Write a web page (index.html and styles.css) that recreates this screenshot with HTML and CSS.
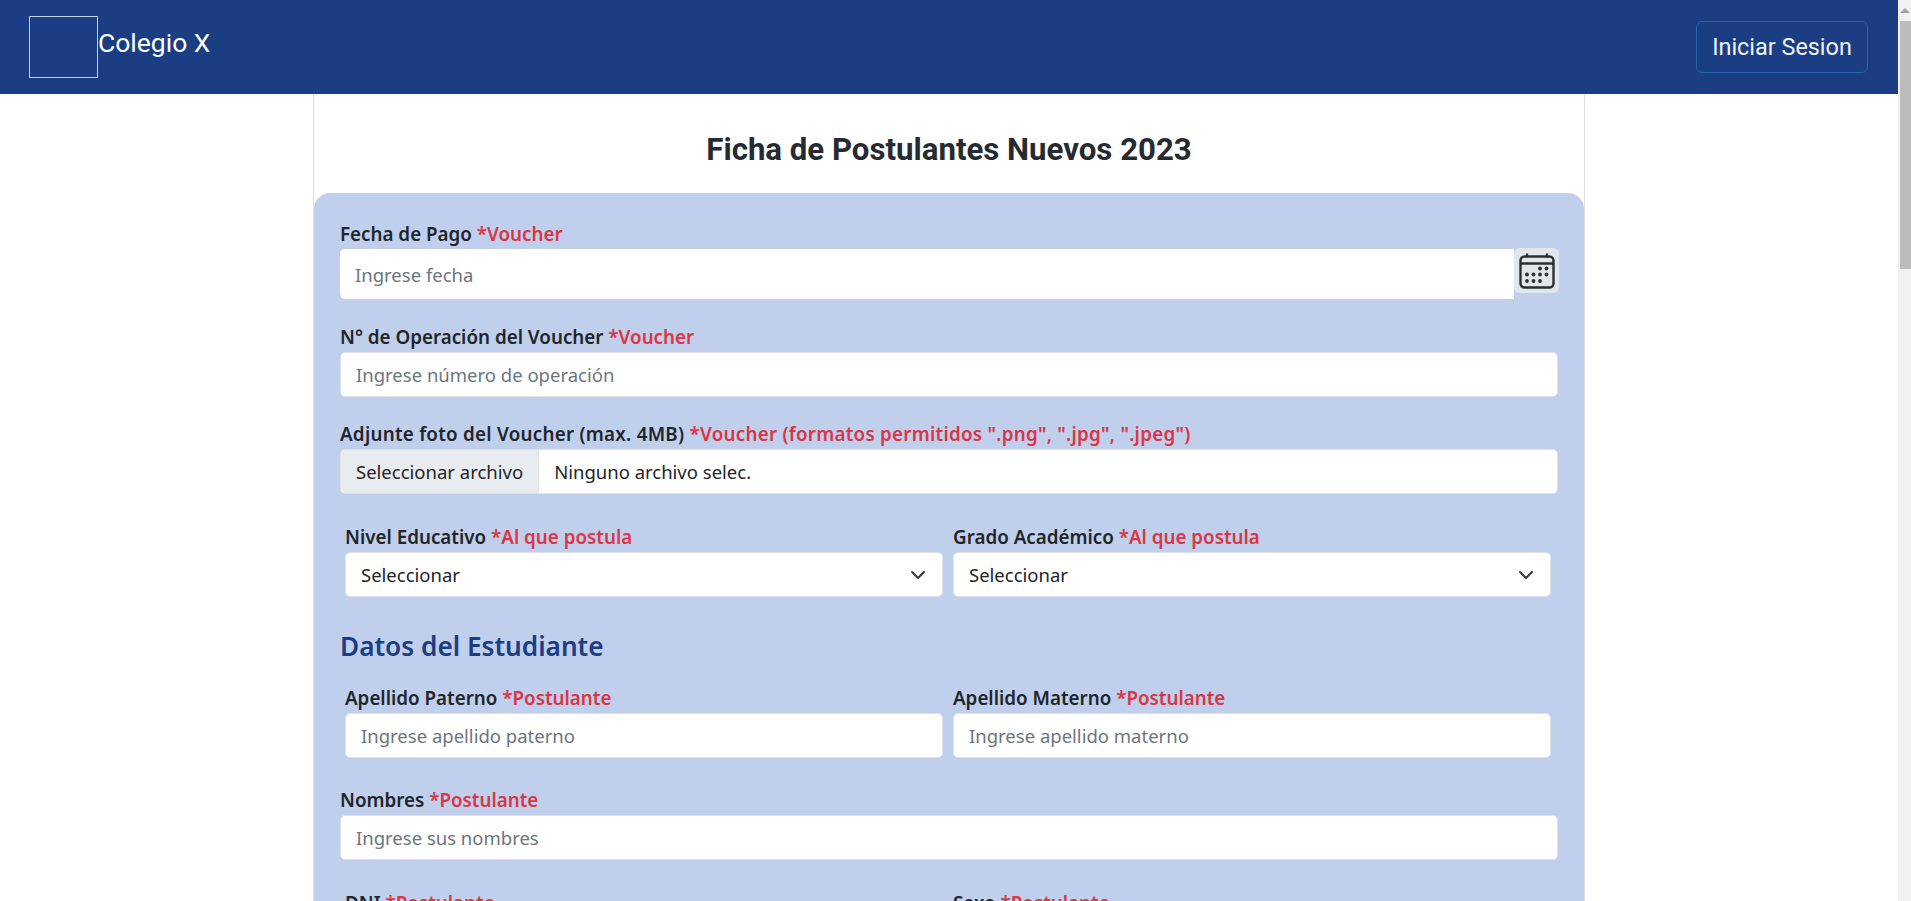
FILE: index.html
```html
<!DOCTYPE html>
<html lang="es">
<head>
  <meta charset="UTF-8">
  <title>Ficha de Postulantes Nuevos 2023</title>
  <meta name="viewport" content="width=device-width, initial-scale=1.0">
  <link rel="stylesheet" href="styles.css">
</head>
<body>

<nav class="navbar">
  <a class="brand" href="#">
    <span class="logo"></span>
    <span class="brand-name">Colegio X</span>
  </a>
  <button class="login-button" type="button">Iniciar Sesion</button>
</nav>

<main class="container">
  <h1>Ficha de Postulantes Nuevos 2023</h1>

  <form class="form-card">
    <div class="field date-field">
      <label>Fecha de Pago <span class="required">*Voucher</span></label>
      <div class="date-group">
        <input class="form-control date-input" type="text" placeholder="Ingrese fecha">
        <button class="calendar-button" type="button" aria-label="Abrir calendario">
          <svg viewBox="0 0 36 36" width="36" height="36" fill="none" stroke="#2b2f33">
            <rect x="1.5" y="3.5" width="33" height="31" rx="4" stroke-width="2.4"/>
            <path d="M1.5 10.5h33" stroke-width="2.4"/>
            <path d="M8 .5v4M28 .5v4" stroke-width="2.2"/>
            <g fill="#2b2f33" stroke="none">
              <circle cx="21" cy="15.5" r="1.9"/><circle cx="27.5" cy="15.5" r="1.9"/>
              <circle cx="8" cy="21.5" r="1.9"/><circle cx="14.5" cy="21.5" r="1.9"/><circle cx="21" cy="21.5" r="1.9"/><circle cx="27.5" cy="21.5" r="1.9"/>
              <circle cx="8" cy="28" r="1.9"/><circle cx="14.5" cy="28" r="1.9"/><circle cx="21" cy="28" r="1.9"/>
            </g>
          </svg>
        </button>
      </div>
    </div>

    <div class="field">
      <label>N° de Operación del Voucher <span class="required">*Voucher</span></label>
      <input class="form-control" type="text" placeholder="Ingrese número de operación">
    </div>

    <div class="field field-wide">
      <label class="label-long">Adjunte foto del Voucher (max. 4MB) <span class="required">*Voucher (formatos permitidos ".png", ".jpg", ".jpeg")</span></label>
      <div class="file-control">
        <span class="file-button">Seleccionar archivo</span>
        <span class="file-name">Ninguno archivo selec.</span>
      </div>
    </div>

    <div class="field-row">
      <div>
        <label>Nivel Educativo <span class="required">*Al que postula</span></label>
        <select class="form-control form-select"><option>Seleccionar</option></select>
      </div>
      <div>
        <label>Grado Académico <span class="required">*Al que postula</span></label>
        <select class="form-control form-select"><option>Seleccionar</option></select>
      </div>
    </div>

    <h2>Datos del Estudiante</h2>

    <div class="field-row">
      <div>
        <label>Apellido Paterno <span class="required">*Postulante</span></label>
        <input class="form-control" type="text" placeholder="Ingrese apellido paterno">
      </div>
      <div>
        <label>Apellido Materno <span class="required">*Postulante</span></label>
        <input class="form-control" type="text" placeholder="Ingrese apellido materno">
      </div>
    </div>

    <div class="field field-wide">
      <label>Nombres <span class="required">*Postulante</span></label>
      <input class="form-control" type="text" placeholder="Ingrese sus nombres">
    </div>

    <div class="field-row">
      <div>
        <label>DNI <span class="required">*Postulante</span></label>
        <input class="form-control" type="text" placeholder="Ingrese DNI">
      </div>
      <div>
        <label>Sexo <span class="required">*Postulante</span></label>
        <select class="form-control form-select"><option>Seleccionar</option></select>
      </div>
    </div>
  </form>
</main>

<!-- the window's own scrollbar, as in the screenshot -->
<div class="scrollbar" aria-hidden="true">
  <span class="scroll-arrow"></span>
  <span class="scroll-thumb"></span>
</div>

</body>
</html>
```

FILE: styles.css
```css
body {
  font-family: "Noto Sans", "Open Sans", sans-serif;
  margin: 0;
  padding-right: 13px;
  color: #212529;
  background-color: #fff;
}

.scrollbar {
  position: fixed;
  top: 0;
  right: 0;
  bottom: 0;
  width: 13px;
  background-color: #f1f1f1;
}

.scroll-arrow {
  position: absolute;
  top: 8px;
  left: 2px;
  border-left: 5px solid transparent;
  border-right: 5px solid transparent;
  border-bottom: 5px solid #a3a3a3;
}

.scroll-thumb {
  position: absolute;
  top: 21px;
  left: 2px;
  width: 11px;
  height: 248px;
  background-color: #bcbcbc;
}

.navbar {
  display: flex;
  justify-content: space-between;
  align-items: flex-start;
  height: 94px;
  padding: 16px 30px 0 29px;
  box-sizing: border-box;
  background-color: #1a3d84;
}

.brand {
  display: flex;
  color: #fff;
  text-decoration: none;
}

.logo {
  width: 69px;
  height: 62px;
  box-sizing: border-box;
  border: 1px solid #c5cede;
}

.brand-name {
  font-family: Roboto, sans-serif;
  font-size: 26.5px;
  line-height: 54px;
}

.login-button {
  width: 172px;
  height: 52px;
  margin-top: 5px;
  padding: 0;
  font-family: Roboto, sans-serif;
  font-size: 23.4px;
  color: #eef4fb;
  background: none;
  border: 1px solid #2766ab;
  border-radius: 6px;
}

.container {
  width: 1270px;
  margin: 0 auto;
  border-left: 1px solid #dcdcdc;
  border-right: 1px solid #dcdcdc;
}

h1 {
  margin: 0;
  padding-top: 38px;
  height: 61px;
  font-family: Roboto, sans-serif;
  font-size: 31.2px;
  line-height: 36px;
  font-weight: 700;
  text-align: center;
  color: #272b2f;
}

.form-card {
  padding: 29px 26px 40px;
  background-color: #bfcfec;
  border-radius: 16px 16px 0 0;
}

label {
  display: block;
  padding-bottom: 2px;
  font-size: 18.8px;
  line-height: 25px;
  font-weight: 600;
  white-space: nowrap;
}

.label-long {
  letter-spacing: 0.25px;
}

.required {
  color: #dc3545;
}

.field {
  margin-bottom: 25px;
}

.date-field {
  margin-bottom: 26px;
}

.field-wide {
  margin-bottom: 31px;
}

.field-row {
  display: grid;
  grid-template-columns: 1fr 1fr;
  gap: 10px;
  padding: 0 7px 0 5px;
  margin-bottom: 30px;
}

.form-control {
  display: block;
  width: 100%;
  height: 45px;
  box-sizing: border-box;
  padding: 0 15px;
  font-family: inherit;
  font-size: 18.5px;
  color: #212529;
  background-color: #fff;
  border: 1px solid #dee2e6;
  border-radius: 5px;
}

.form-control::placeholder {
  color: #6c757d;
}

.date-group {
  display: flex;
  align-items: flex-start;
  margin-right: -1px;
}

.date-input {
  height: 50px;
  flex: 1;
  min-width: 0;
  border: none;
  border-radius: 5px 0 0 5px;
}

.calendar-button {
  display: flex;
  align-items: center;
  justify-content: center;
  width: 45px;
  height: 45px;
  margin-top: -1px;
  padding: 0;
  background-color: #e1e6ea;
  border: none;
  border-radius: 6px;
}

.file-control {
  display: flex;
  height: 45px;
  box-sizing: border-box;
  font-size: 18.5px;
  line-height: 43px;
  background-color: #fff;
  border: 1px solid #dee2e6;
  border-radius: 5px;
  overflow: hidden;
}

.file-button {
  padding: 0 15px;
  background-color: #e9ecef;
  border-right: 1px solid #dee2e6;
}

.file-name {
  padding-left: 15px;
}

.form-select {
  appearance: none;
  background-image: url("data:image/svg+xml,%3csvg xmlns='http://www.w3.org/2000/svg' viewBox='0 0 16 16'%3e%3cpath fill='none' stroke='%23343a40' stroke-linecap='round' stroke-linejoin='round' stroke-width='2' d='m2 5 6 6 6-6'/%3e%3c/svg%3e");
  background-repeat: no-repeat;
  background-position: right 16px center;
  background-size: 16px 16px;
}

h2 {
  margin: 0 0 22px;
  padding-top: 2px;
  font-size: 26.2px;
  line-height: 35px;
  font-weight: 600;
  color: #1a3d84;
}
```
